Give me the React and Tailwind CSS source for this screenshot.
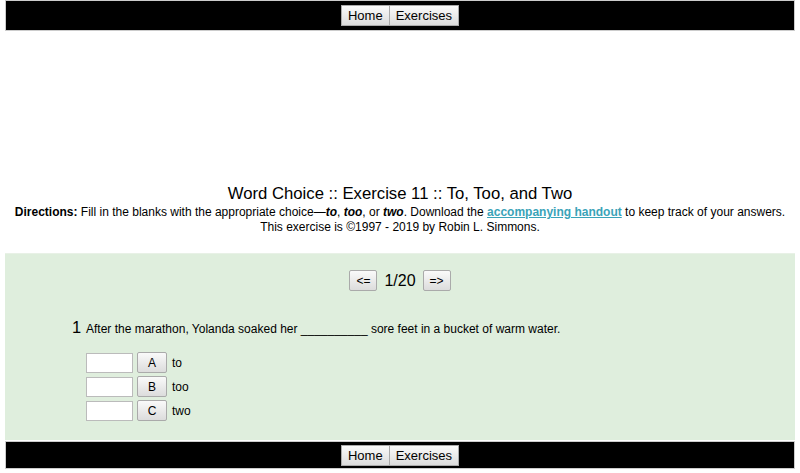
import React from 'react';

const NavBar = ({ className = '' }) => (
  <div className={`mx-[5px] bg-black border border-[#ccc] flex justify-center items-center ${className}`}>
    <div className="flex">
      <button className="h-[21px] px-[6px] text-[13px] text-black bg-gradient-to-b from-[#fafafa] to-[#dcdcdc] border border-[#aaa] leading-none">Home</button>
      <button className="h-[21px] px-[6px] text-[13px] text-black bg-gradient-to-b from-[#fafafa] to-[#dcdcdc] border border-l-0 border-[#aaa] leading-none">Exercises</button>
    </div>
  </div>
);

const Btn = ({ children, className = '' }) => (
  <button className={`h-[21px] text-[12px] text-black bg-gradient-to-b from-[#fafafa] to-[#dcdcdc] border border-[#aaa] rounded-[2px] leading-none ${className}`}>
    {children}
  </button>
);

const choices = [
  { key: 'A', word: 'to' },
  { key: 'B', word: 'too' },
  { key: 'C', word: 'two' },
];

export default function App() {
  return (
    <div className="w-[800px] h-[473px] bg-white text-black overflow-hidden" style={{ fontFamily: '"Liberation Sans", Arial, sans-serif' }}>
      <NavBar className="h-[31px]" />

      <div className="h-[152px]" />

      <div className="text-center">
        <h1 className="text-[16.7px] leading-[22px]">Word Choice :: Exercise 11 :: To, Too, and Two</h1>
        <p className="text-[12px] leading-[15px] whitespace-nowrap">
          <b>Directions:</b> Fill in the blanks with the appropriate choice—<b><i>to</i></b>, <b><i>too</i></b>, or <b><i>two</i></b>. Download the{' '}
          <a href="#" className="text-[#3aa3b8] font-bold underline">accompanying handout</a> to keep track of your answers.
        </p>
        <p className="text-[12px] leading-[15px]">This exercise is ©1997 - 2019 by Robin L. Simmons.</p>
      </div>

      <div className="mx-[5px] mt-[18px] h-[187px] bg-[#dfeedd] border-t border-[#e8f1e6]">
        <div className="flex justify-center items-center gap-[7px] pt-[16px]">
          <Btn className="w-[28px]">&lt;=</Btn>
          <span className="text-[16px] leading-none">1/20</span>
          <Btn className="w-[28px]">=&gt;</Btn>
        </div>

        <div className="flex items-baseline pl-[67px] mt-[24px] h-[20px]">
          <span className="text-[16.5px] w-[14px]">1</span>
          <span className="text-[12px]">After the marathon, Yolanda soaked her __________ sore feet in a bucket of warm water.</span>
        </div>

        <div className="pl-[81px] mt-[17px] flex flex-col gap-[3px]">
          {choices.map((c) => (
            <div key={c.key} className="flex items-center h-[21px]">
              <input className="w-[47px] h-[20px] bg-white border border-[#bbb]" />
              <Btn className="w-[30px] ml-[4px]">{c.key}</Btn>
              <span className="text-[12px] ml-[5px]">{c.word}</span>
            </div>
          ))}
        </div>
      </div>

      <NavBar className="h-[28px] mt-[1px]" />
    </div>
  );
}
